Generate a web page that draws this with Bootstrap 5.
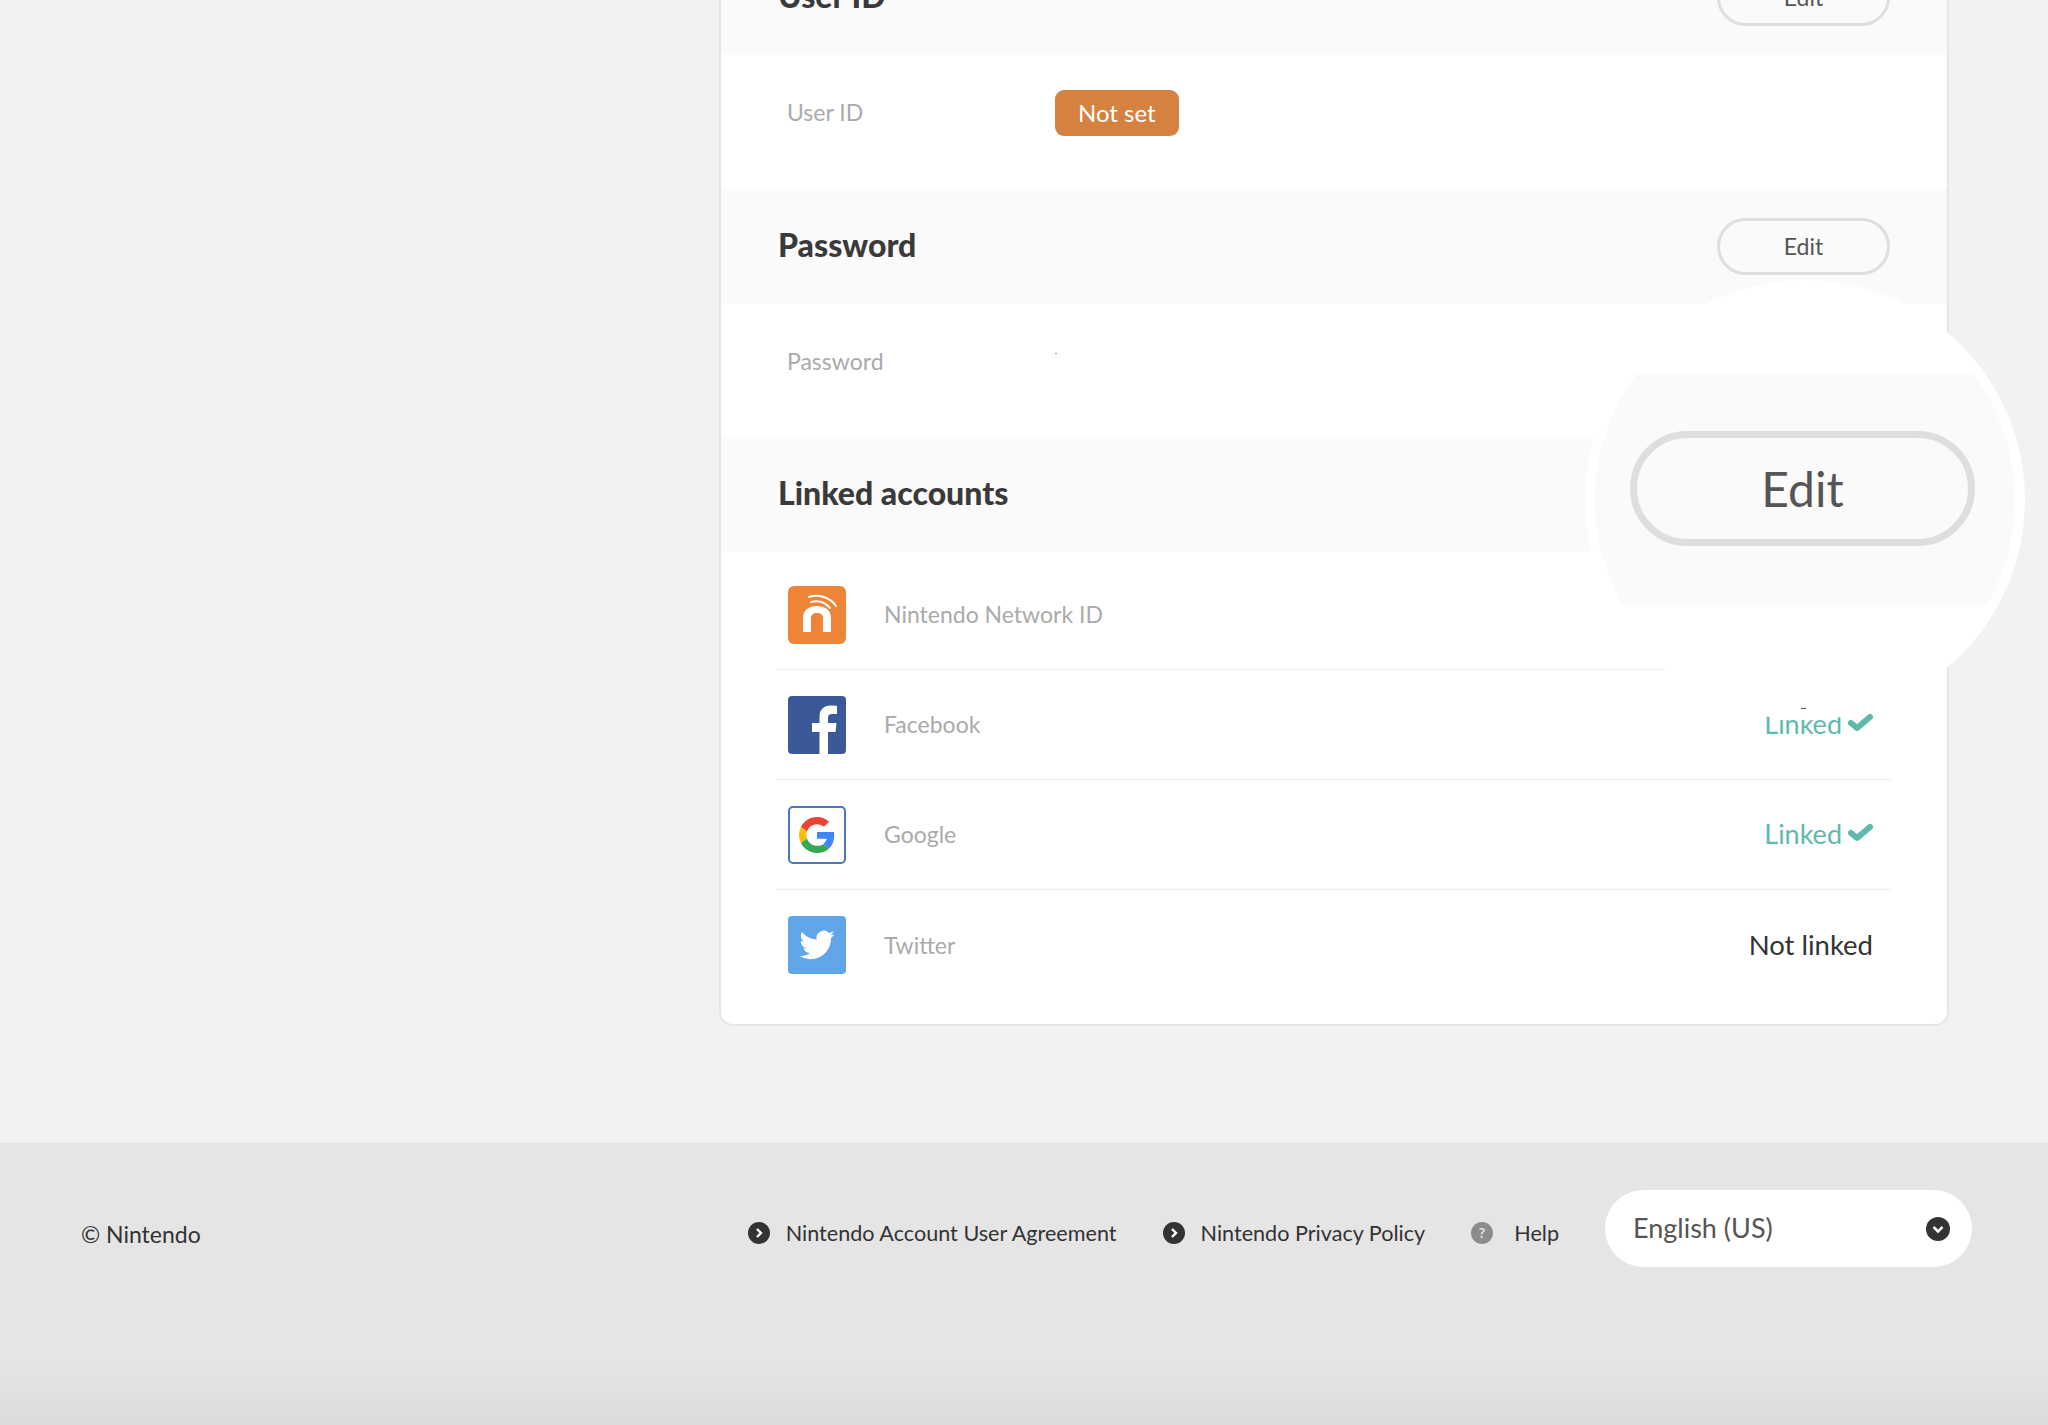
<!DOCTYPE html>
<html lang="en">
<head>
    <meta charset="UTF-8">
    <meta name="viewport" content="width=device-width, initial-scale=1.0">
    <title>Nintendo Account</title>

    <link href="https://cdn.jsdelivr.net/npm/bootstrap@5.3.0/dist/css/bootstrap.min.css" rel="stylesheet">
    <style>
        html, body {
            height: 1425px;
            overflow: hidden;
        }

        body {
            background-color: #f2f2f2;
            font-family: "Lato", "Noto Sans", sans-serif;
            color: #333;
        }

        .page-main {
            height: 1143px;
            padding-right: 99px;
        }

        .acct-panel {
            position: relative;
            width: 1230px;
            height: 1086px;
            margin-top: -60px;
            background-color: #fff;
            border: 2px solid #e6e6e6;
            border-top: 0;
            border-radius: 0 0 14px 14px;
        }

        .sec-head {
            height: 115px;
            padding: 0 57px 0 57px;
            background-color: #fafafa;
        }

        .sec-title {
            margin: 0 0 2px;
            font-size: 32px;
            font-weight: 900;
            color: #3a3a3a;
        }

        .edit-pill {
            width: 173px;
            height: 57px;
            padding: 0;
            font-size: 23px;
            color: #555;
            background: transparent;
            border: 3px solid #dedede;
            border-radius: 29px;
        }

        .sec-body {
            height: 133px;
            padding: 35px 0 0 66px;
        }

        .sec-body-tall {
            height: 134px;
        }

        .sec-label {
            width: 268px;
            font-size: 23px;
            line-height: 44px;
            color: #aaa;
        }

        .not-set {
            padding: 0 23px;
            height: 46px;
            line-height: 46px;
            font-size: 24px;
            color: #fff;
            background-color: #d5813f;
            border-radius: 9px;
        }

        .stray-dot {
            width: 2px;
            height: 1px;
            margin-top: 14px;
            background-color: #999;
        }

        .link-list {
            margin: 8px 56px 0 55px;
        }

        .link-row {
            height: 110px;
            padding: 25px 18px 25px 12px;
            background: transparent;
            border-color: #eee;
            border-width: 0 0 2px;
        }

        .link-row:last-child {
            border-width: 0;
        }

        .link-icon {
            display: block;
            width: 58px;
            height: 58px;
            flex: none;
        }

        .link-name {
            margin-left: 38px;
            font-size: 23px;
            color: #aaa;
        }

        .link-state {
            font-size: 27.500px;
            color: #333;
        }

        .link-state.is-linked {
            font-size: 27px;
            color: #5fb9ad;
        }

        .link-state svg {
            width: 25px;
            height: 20px;
            margin-left: 6px;
            vertical-align: 1px;
        }

        /* magnifier over the panel */
        .zoom-lens {
            position: absolute;
            left: 864px;
            top: 340px;
            width: 440px;
            height: 440px;
            background-color: #fff;
            border-radius: 50%;
        }

        .zoom-inner {
            position: absolute;
            inset: 10px;
            overflow: hidden;
            border-radius: 50%;
        }

        .zoom-band {
            position: absolute;
            left: 0;
            right: 0;
            top: 84px;
            height: 231px;
            background-color: #fafafa;
        }

        .zoom-edit {
            position: absolute;
            left: 35px;
            top: 57px;
            width: 345px;
            height: 115px;
            padding: 0;
            font-size: 48px;
            color: #555;
            background: transparent;
            border: 7px solid #dedede;
            border-radius: 58px;
        }

        .lens-speck {
            position: absolute;
            left: 216px;
            top: 428px;
            width: 5px;
            height: 1px;
            background-color: #555;
        }

        .page-foot {
            height: 282px;
            padding: 47px 76px 0 81px;
            background: linear-gradient(#e5e5e5 77%, #dcdcdc);
        }

        .foot-copy {
            margin-top: 27px;
            font-size: 23px;
        }

        .foot-links {
            gap: 46px;
            margin-right: 46px;
            margin-top: 27px;
        }

        .foot-link {
            gap: 16px;
            font-size: 21.600px;
            color: #333;
            text-decoration: none;
        }

        .foot-help {
            gap: 21px;
        }

        .foot-link svg {
            width: 22px;
            height: 22px;
            flex: none;
        }

        .lang-pick {
            width: 367px;
            height: 77px;
            padding: 0 22px 0 28px;
            font-size: 27px;
            color: #555;
            background-color: #fff;
            border: 0;
            border-radius: 39px;
        }

        .lang-pick svg {
            width: 24px;
            height: 24px;
        }
    </style>
</head>
<body>
<main class="page-main d-flex justify-content-end">
    <div class="acct-panel">
        <div class="sec-head d-flex align-items-center justify-content-between">
            <h2 class="sec-title">User ID</h2>
            <button class="btn edit-pill" type="button">Edit</button>
        </div>
        <div class="sec-body sec-body-tall d-flex align-items-start">
            <div class="sec-label">User ID</div>
            <div class="not-set">Not set</div>
        </div>

        <div class="sec-head d-flex align-items-center justify-content-between">
            <h2 class="sec-title">Password</h2>
            <button class="btn edit-pill" type="button">Edit</button>
        </div>
        <div class="sec-body d-flex align-items-start">
            <div class="sec-label">Password</div>
            <div class="stray-dot"></div>
        </div>

        <div class="sec-head d-flex align-items-center justify-content-between">
            <h2 class="sec-title">Linked accounts</h2>
        </div>
        <ul class="list-group list-group-flush link-list">
            <li class="list-group-item link-row d-flex align-items-center">
                <svg class="link-icon" viewBox="0 0 58 58">
                    <rect width="58" height="58" rx="6" fill="#ee8436"/>
                    <path d="M15 46V32c0-8 6-12 14-12s14 4 14 12v14h-8V32c0-3-2-5-6-5s-6 2-6 5v14z" fill="#fff"/>
                    <g fill="none" stroke="#fff" stroke-width="2" stroke-linecap="round">
                        <path d="M23 16c7-2 14 0 19 6"/>
                        <path d="M21 11c9-3 21 0 27 9"/>
                    </g>
                </svg>
                <span class="link-name">Nintendo Network ID</span>
            </li>
            <li class="list-group-item link-row d-flex align-items-center justify-content-between">
                <div class="d-flex align-items-center">
                    <svg class="link-icon" viewBox="0 0 58 58">
                        <rect width="58" height="58" rx="4" fill="#3b5998"/>
                        <path d="M40 58V36h7.500l1-9H40v-5c0-2.500 1-4 4-4h5v-8c-1-.2-3.500-.4-6.500-.4-6.500 0-11 4-11 11V27H24v9h7.500v22z" fill="#fff"/>
                    </svg>
                    <span class="link-name">Facebook</span>
                </div>
                <span class="link-state is-linked">Linked<svg viewBox="0 0 25 20"><path d="M3 10l6 5L22 4" fill="none" stroke="#5fb9ad" stroke-width="6" stroke-linecap="round" stroke-linejoin="round"/></svg></span>
            </li>
            <li class="list-group-item link-row d-flex align-items-center justify-content-between">
                <div class="d-flex align-items-center">
                    <svg class="link-icon" viewBox="0 0 58 58">
                        <rect x="1" y="1" width="56" height="56" rx="4" fill="#fff" stroke="#4a75bf" stroke-width="2"/>
                        <g transform="translate(11 11) scale(.75)">
                            <path fill="#EA4335" d="M24 9.500c3.540 0 6.710 1.220 9.210 3.600l6.850-6.850C35.900 2.380 30.470 0 24 0 14.620 0 6.510 5.380 2.560 13.220l7.980 6.190C12.430 13.720 17.740 9.500 24 9.500z"/>
                            <path fill="#4285F4" d="M46.980 24.550c0-1.570-.15-3.090-.38-4.550H24v9.020h12.940c-.58 2.960-2.260 5.480-4.780 7.180l7.730 6c4.510-4.180 7.090-10.360 7.090-17.650z"/>
                            <path fill="#FBBC05" d="M10.530 28.590c-.48-1.450-.76-2.990-.76-4.590s.27-3.140.76-4.590l-7.980-6.190C.92 16.460 0 20.120 0 24c0 3.880.92 7.540 2.560 10.780l7.970-6.190z"/>
                            <path fill="#34A853" d="M24 48c6.480 0 11.930-2.130 15.890-5.810l-7.730-6c-2.150 1.450-4.920 2.300-8.160 2.300-6.260 0-11.570-4.220-13.470-9.910l-7.980 6.190C6.510 42.620 14.620 48 24 48z"/>
                        </g>
                    </svg>
                    <span class="link-name">Google</span>
                </div>
                <span class="link-state is-linked">Linked<svg viewBox="0 0 25 20"><path d="M3 10l6 5L22 4" fill="none" stroke="#5fb9ad" stroke-width="6" stroke-linecap="round" stroke-linejoin="round"/></svg></span>
            </li>
            <li class="list-group-item link-row d-flex align-items-center justify-content-between">
                <div class="d-flex align-items-center">
                    <svg class="link-icon" viewBox="0 0 58 58">
                        <rect width="58" height="58" rx="4" fill="#62a6ea"/>
                        <g transform="translate(11.500 11.500) scale(1.460)">
                            <path fill="#fff" d="M23.953 4.570a10 10 0 01-2.825.775 4.958 4.958 0 002.163-2.723c-.951.555-2.005.959-3.127 1.184a4.920 4.920 0 00-8.384 4.482C7.690 8.095 4.067 6.130 1.640 3.162a4.822 4.822 0 00-.666 2.475c0 1.710.870 3.213 2.188 4.096a4.904 4.904 0 01-2.228-.616v.060a4.923 4.923 0 003.946 4.827 4.996 4.996 0 01-2.212.085 4.936 4.936 0 004.604 3.417 9.867 9.867 0 01-6.102 2.105c-.390 0-.779-.023-1.170-.067a13.995 13.995 0 007.557 2.209c9.053 0 13.998-7.496 13.998-13.985 0-.210 0-.420-.015-.630A9.935 9.935 0 0024 4.590z"/>
                        </g>
                    </svg>
                    <span class="link-name">Twitter</span>
                </div>
                <span class="link-state">Not linked</span>
            </li>
        </ul>

        <div class="zoom-lens">
            <div class="zoom-inner">
                <div class="zoom-band">
                    <button class="btn zoom-edit d-flex align-items-center justify-content-center" type="button">Edit</button>
                </div>
            </div>
            <div class="lens-speck"></div>
        </div>
    </div>
</main>

<footer class="page-foot d-flex align-items-start justify-content-between">
    <div class="foot-copy">© Nintendo</div>
    <div class="d-flex align-items-start">
        <div class="foot-links d-flex align-items-center">
            <a class="foot-link d-flex align-items-center" href="#">
                <svg viewBox="0 0 22 22"><circle cx="11" cy="11" r="11" fill="#333"/><path d="M9 7l4 4-4 4" fill="none" stroke="#fff" stroke-width="2.400"/></svg>
                Nintendo Account User Agreement
            </a>
            <a class="foot-link d-flex align-items-center" href="#">
                <svg viewBox="0 0 22 22"><circle cx="11" cy="11" r="11" fill="#333"/><path d="M9 7l4 4-4 4" fill="none" stroke="#fff" stroke-width="2.400"/></svg>
                Nintendo Privacy Policy
            </a>
            <a class="foot-link foot-help d-flex align-items-center" href="#">
                <svg viewBox="0 0 22 22"><circle cx="11" cy="11" r="11" fill="#8c8c8c"/><text x="11" y="16" text-anchor="middle" font-size="14" font-weight="700" fill="#e5e5e5">?</text></svg>
                Help
            </a>
        </div>
        <button class="lang-pick d-flex align-items-center justify-content-between" type="button">
            English (US)
            <svg viewBox="0 0 24 24"><circle cx="12" cy="12" r="12" fill="#333"/><path d="M7.500 10l4.500 4.500 4.500-4.500" fill="none" stroke="#fff" stroke-width="2.600"/></svg>
        </button>
    </div>
</footer>

<script src="https://cdn.jsdelivr.net/npm/bootstrap@5.3.0/dist/js/bootstrap.bundle.min.js"></script>
</body>
</html>
